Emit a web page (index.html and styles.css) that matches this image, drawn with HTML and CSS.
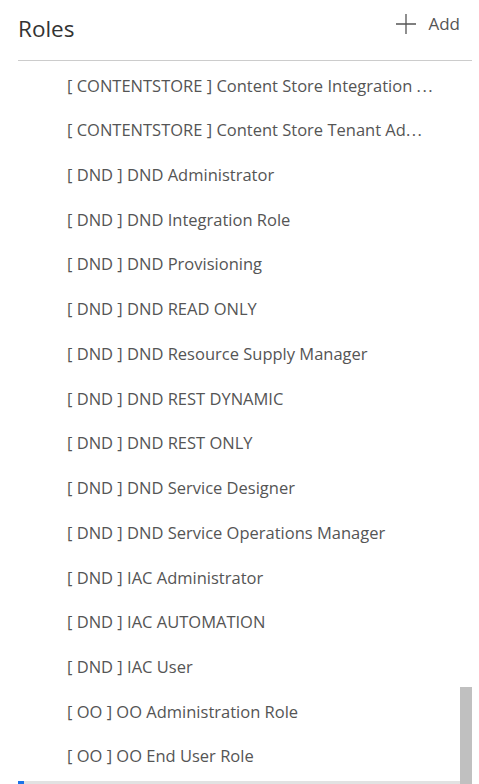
FILE: index.html
```html
<!DOCTYPE html>
<html>
<head>
<meta charset="utf-8">
<link rel="stylesheet" href="styles.css">
</head>
<body>
<div class="panel">
  <div class="header">
    <h1 class="title">Roles</h1>
    <button class="add">
      <svg class="plus" width="20" height="20" viewBox="0 0 20 20"><path d="M10 0V20M0 10H20" stroke="#555" stroke-width="1.3" fill="none"/></svg>
      <span>Add</span>
    </button>
  </div>
  <div class="viewport">
    <ul class="list">
      <li>[ CONTENTSTORE ] Content Store Integration <span class="dots">...</span></li>
      <li>[ CONTENTSTORE ] Content Store Tenant Ad<span class="dots">...</span></li>
      <li>[ DND ] DND Administrator</li>
      <li>[ DND ] DND Integration Role</li>
      <li>[ DND ] DND Provisioning</li>
      <li>[ DND ] DND READ ONLY</li>
      <li>[ DND ] DND Resource Supply Manager</li>
      <li>[ DND ] DND REST DYNAMIC</li>
      <li>[ DND ] DND REST ONLY</li>
      <li>[ DND ] DND Service Designer</li>
      <li>[ DND ] DND Service Operations Manager</li>
      <li>[ DND ] IAC Administrator</li>
      <li>[ DND ] IAC AUTOMATION</li>
      <li>[ DND ] IAC User</li>
      <li>[ OO ] OO Administration Role</li>
      <li>[ OO ] OO End User Role</li>
    </ul>
    <div class="thumb"></div>
    <div class="hbar"><div class="hbar-fill"></div></div>
  </div>
</div>
</body>
</html>
```
FILE: styles.css
```css
html, body {
  margin: 0;
  padding: 0;
  background: #fff;
  font-family: "Open Sans", "Liberation Sans", sans-serif;
}
.panel {
  margin: 0 7px 0 18px;
  height: 784px;
  display: flex;
  flex-direction: column;
  overflow: hidden;
}
.header {
  height: 60px;
  border-bottom: 1px solid #ccc;
  display: flex;
  justify-content: space-between;
  align-items: flex-start;
  flex: none;
}
.title {
  margin: 15px 0 0 0;
  font-size: 22.5px;
  font-weight: 400;
  color: #333;
  line-height: 28px;
}
.add {
  border: none;
  background: none;
  padding: 0;
  margin: 12px 12px 0 0;
  display: flex;
  align-items: center;
  gap: 12px;
  font-family: inherit;
  font-size: 17px;
  color: #555;
  cursor: pointer;
}
.plus { display: block; margin-left: 1px; }
.viewport {
  position: relative;
  margin-top: 19px;
  flex: 1;
  overflow: hidden;
}
.list {
  list-style: none;
  margin: -16.4px 0 0 0;
  padding: 0;
}
.list li {
  height: 44.73px;
  line-height: 44.73px;
  padding-left: 49px;
  white-space: nowrap;
  font-size: 16.5px;
  color: #555;
}
.dots {
  letter-spacing: 1.5px;
}
.thumb {
  position: absolute;
  right: 0;
  top: 607px;
  width: 12px;
  height: 120px;
  background: #c0c0c0;
}
.hbar {
  position: absolute;
  left: 0;
  right: 12px;
  bottom: 0;
  height: 3px;
  background: #e2e2e2;
}
.hbar-fill {
  width: 6px;
  height: 100%;
  background: #1a73e8;
}
```
